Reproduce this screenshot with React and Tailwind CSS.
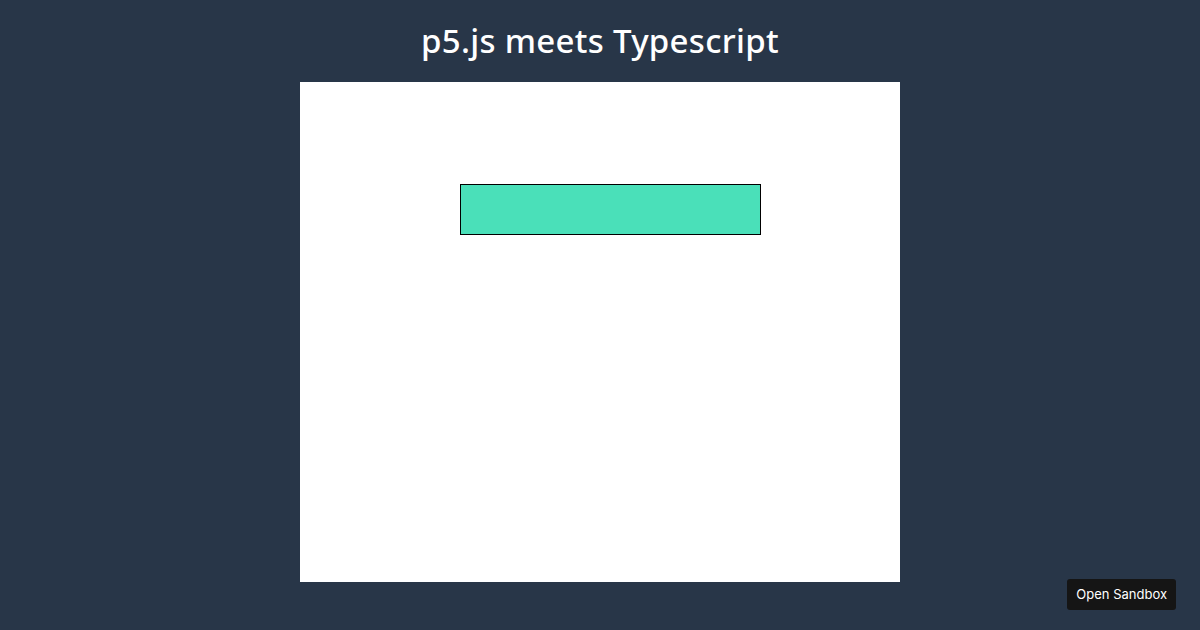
export default function App() {
  return (
    <div className="relative w-[1200px] h-[630px] bg-[#283648] overflow-hidden">
      {/* Header */}
      <h1
        className="h-[82px] flex items-center justify-center text-white text-[33px] font-medium tracking-[0.3px]"
        style={{ fontFamily: '"Noto Sans", "Open Sans", sans-serif' }}
      >
        p5.js meets Typescript
      </h1>

      {/* Sketch canvas */}
      <div className="mx-auto w-[600px] h-[500px] bg-white">
        <svg width="600" height="500" viewBox="0 0 600 500">
          <rect x="160.5" y="102.5" width="300" height="50" fill="#4ae0b9" stroke="#000" strokeWidth="1" />
        </svg>
      </div>

      {/* Open Sandbox button */}
      <button
        className="absolute right-[24px] bottom-[20px] h-[31px] px-[9px] rounded-[3px] bg-[#151515] text-[13px] text-white"
        style={{ fontFamily: 'Inter, "Liberation Sans", sans-serif' }}
      >
        Open Sandbox
      </button>
    </div>
  )
}
